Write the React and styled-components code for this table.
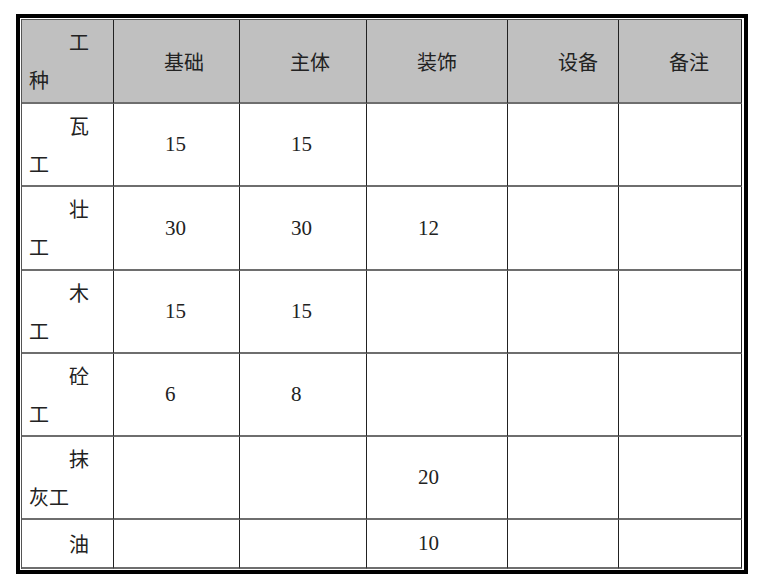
import React from "react";
import styled, { createGlobalStyle } from "styled-components";

const headers = ["基础", "主体", "装饰", "设备", "备注"];

const rows = [
    { name: "瓦工", values: ["15", "15", "", "", ""], height: 83 },
    { name: "壮工", values: ["30", "30", "12", "", ""], height: 84 },
    { name: "木工", values: ["15", "15", "", "", ""], height: 83 },
    { name: "砼工", values: ["6", "8", "", "", ""], height: 83 },
    { name: "抹灰工", values: ["", "", "20", "", ""], height: 83 },
    { name: "油", values: ["", "", "10", "", ""], height: 49 },
];

const App = () => {
    return (
        <>
            <GlobalStyle />
            <Frame>
                <Grid>
                    <NameCell $head $h={84}>工种</NameCell>
                    {headers.map((h) => (
                        <Cell key={h} $head $h={84}>{h}</Cell>
                    ))}
                    {rows.map((r) => (
                        <React.Fragment key={r.name}>
                            <NameCell $h={r.height}>{r.name}</NameCell>
                            {r.values.map((v, i) => (
                                <Cell key={i} $h={r.height} $num>{v}</Cell>
                            ))}
                        </React.Fragment>
                    ))}
                </Grid>
            </Frame>
        </>
    );
};

/* --------------------------------------------------- STYLES --------------------------------------------------- */

const GlobalStyle = createGlobalStyle`
    html, body {
        margin: 0;
        background: #ffffff;
    }
    body {
        padding: 14px 0 0 16px;
        font-family: "Noto Sans CJK SC", sans-serif;
    }
`;

const Frame = styled.div`
    display: inline-block;
    border: 4px solid #000000;
    padding: 1px 2px 1px 1px;
`;

const Grid = styled.div`
    display: grid;
    grid-template-columns: 92px 126px 127px 141px 111px 123px;
    border-top: 1px solid #555555;
    border-left: 1px solid #555555;
`;

const Cell = styled.div`
    box-sizing: border-box;
    height: ${(p) => p.$h}px;
    display: flex;
    align-items: center;
    padding: 0 8px;
    text-indent: ${(p) => (p.$num ? "43px" : "42px")};
    border-right: 1px solid #222222;
    border-bottom: 2px solid #6e6e6e;
    background: ${(p) => (p.$head ? "#c0c0c0" : "#ffffff")};
    color: #222222;
    font-family: ${(p) => (p.$num ? '"Liberation Serif", serif' : '"Noto Sans CJK SC", sans-serif')};
    font-size: ${(p) => (p.$num ? "21px" : "20px")};
`;

const NameCell = styled(Cell)`
    display: flex;
    align-items: center;
    padding: 0 7px;
    text-indent: 2em;
    line-height: 38px;
    font-family: "Noto Sans CJK SC", sans-serif;
    font-size: 20px;
    word-break: break-all;
`;

export default App;
